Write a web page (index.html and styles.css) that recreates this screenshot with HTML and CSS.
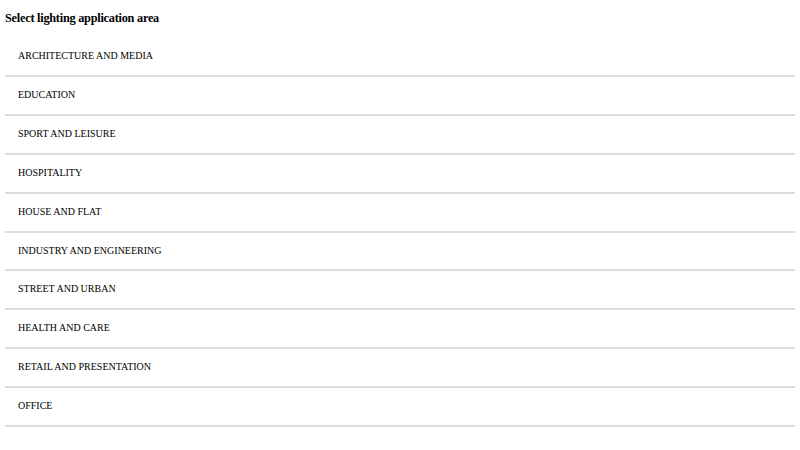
FILE: index.html
```html
<!DOCTYPE html>
<html>
<head>
<meta charset="utf-8">
<link rel="stylesheet" href="styles.css">
</head>
<body>
<div class="page">
  <h3 class="title">Select lighting application area</h3>
  <ul class="areas">
    <li class="area">ARCHITECTURE AND MEDIA</li>
    <li class="area">EDUCATION</li>
    <li class="area">SPORT AND LEISURE</li>
    <li class="area">HOSPITALITY</li>
    <li class="area">HOUSE AND FLAT</li>
    <li class="area">INDUSTRY AND ENGINEERING</li>
    <li class="area">STREET AND URBAN</li>
    <li class="area">HEALTH AND CARE</li>
    <li class="area">RETAIL AND PRESENTATION</li>
    <li class="area">OFFICE</li>
  </ul>
</div>
</body>
</html>
```
FILE: styles.css
```css
html, body {
  margin: 0;
  padding: 0;
  background: #fff;
}
.page {
  padding: 5px;
  font-family: "Liberation Serif", "Times New Roman", serif;
  color: #000;
}
.title {
  margin: 6px 0 0 0;
  font-size: 12.3px;
  line-height: 14px;
  letter-spacing: -0.25px;
  font-weight: bold;
}
.areas {
  list-style: none;
  margin: 13px 0 0 0;
  padding: 0;
}
.area {
  font-size: 10px;
  line-height: 12.9px;
  padding: 12px 13px;
  border-bottom: 2px solid #dcdcdc;
}
```
